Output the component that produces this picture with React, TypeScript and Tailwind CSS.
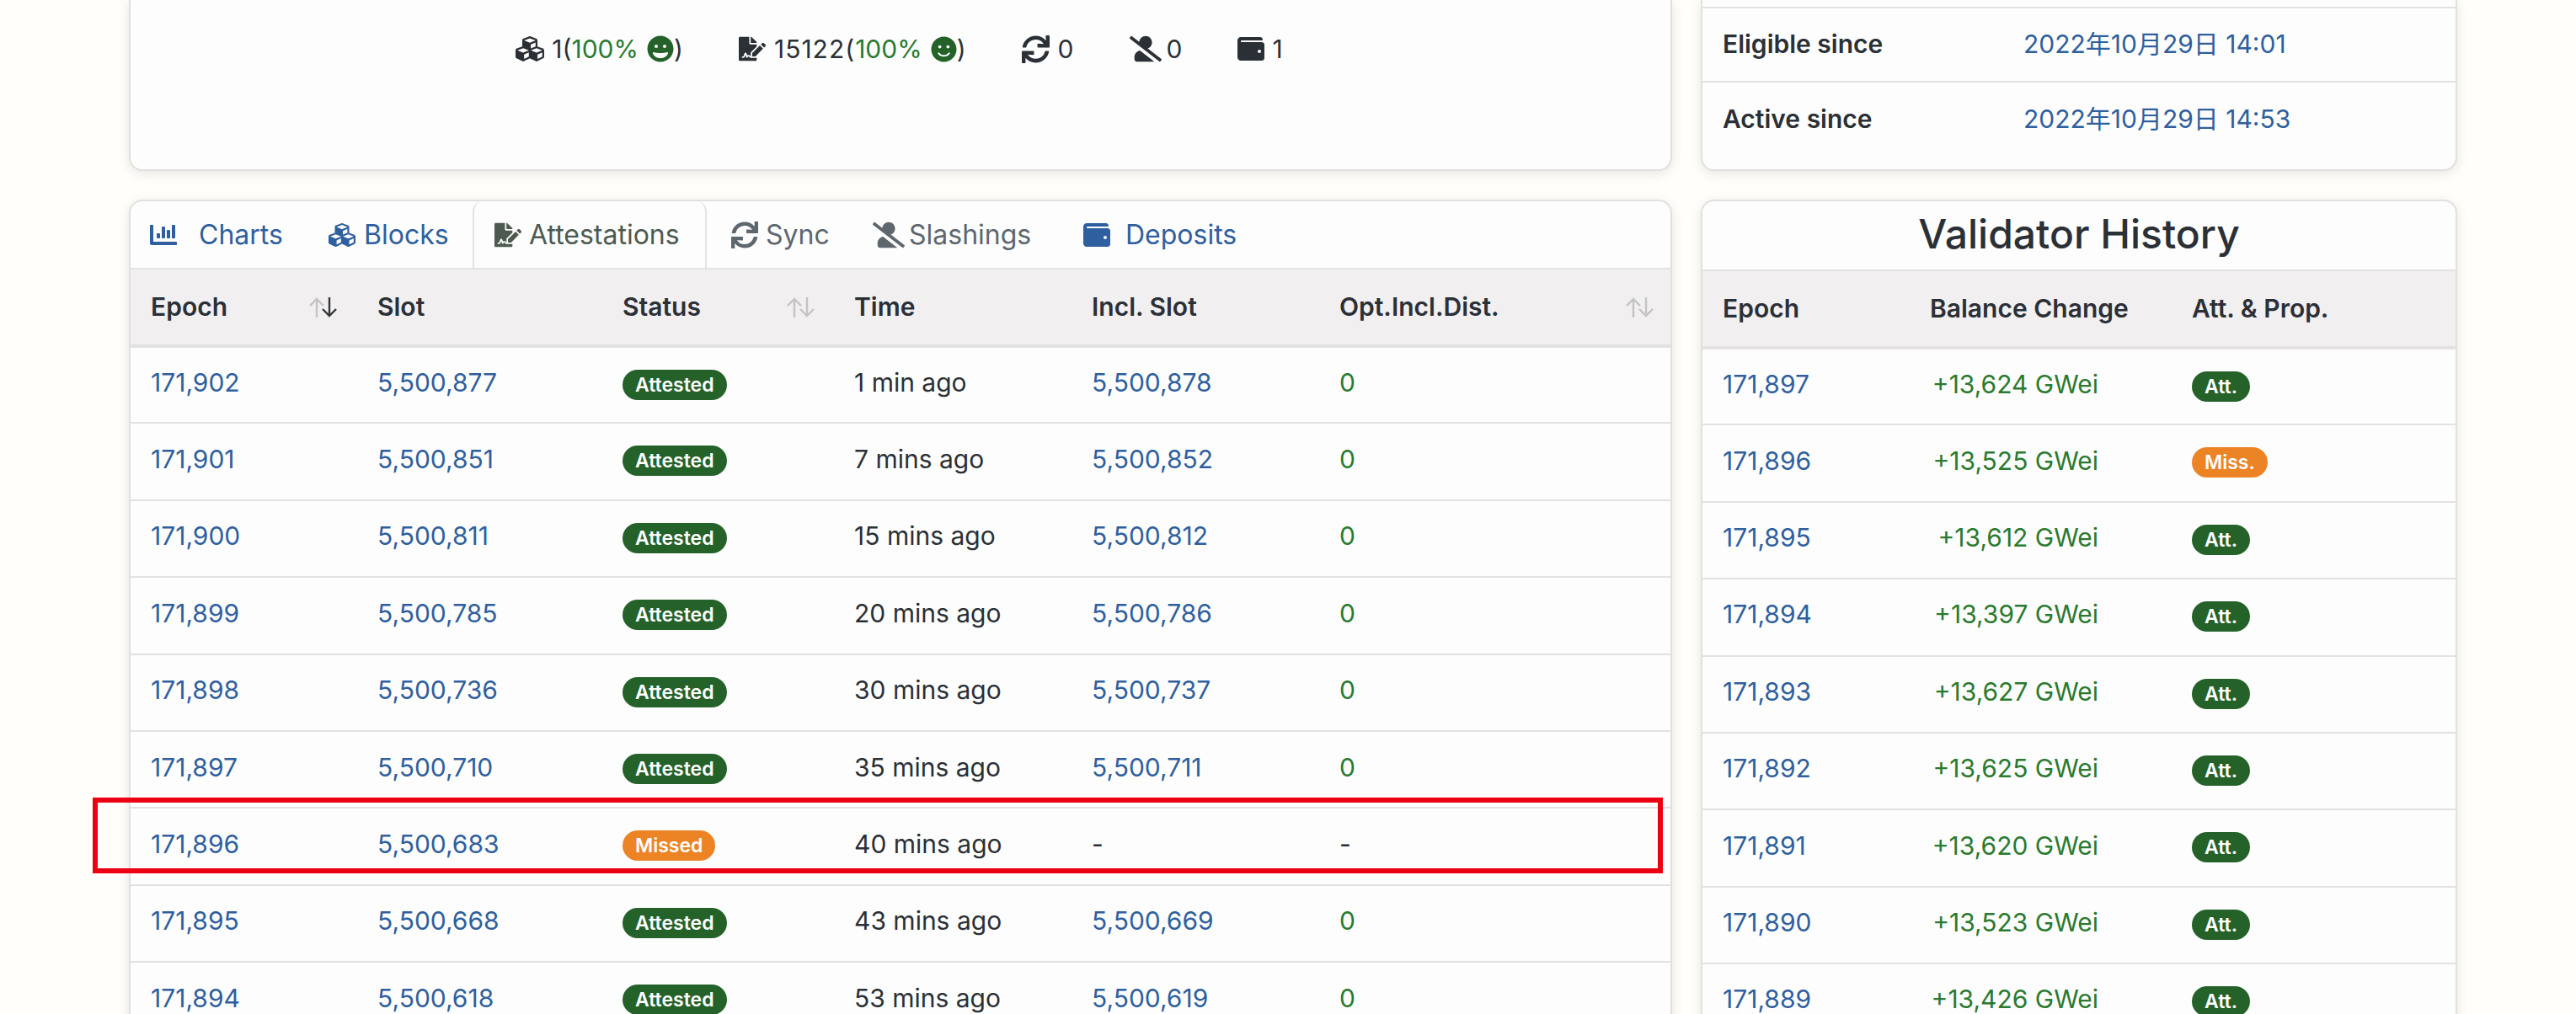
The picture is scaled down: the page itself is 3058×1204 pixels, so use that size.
import { FaChartBar, FaCubes, FaFileSignature, FaSync, FaUserSlash, FaWallet, FaGrin, FaSmile } from "react-icons/fa";
import type { ReactNode } from "react";

const font = { fontFamily: "Inter, 'Noto Sans CJK SC', sans-serif" };

const attestations = [
  ["171,902", "5,500,877", "Attested", "1 min ago", "5,500,878", "0"],
  ["171,901", "5,500,851", "Attested", "7 mins ago", "5,500,852", "0"],
  ["171,900", "5,500,811", "Attested", "15 mins ago", "5,500,812", "0"],
  ["171,899", "5,500,785", "Attested", "20 mins ago", "5,500,786", "0"],
  ["171,898", "5,500,736", "Attested", "30 mins ago", "5,500,737", "0"],
  ["171,897", "5,500,710", "Attested", "35 mins ago", "5,500,711", "0"],
  ["171,896", "5,500,683", "Missed", "40 mins ago", "-", "-"],
  ["171,895", "5,500,668", "Attested", "43 mins ago", "5,500,669", "0"],
  ["171,894", "5,500,618", "Attested", "53 mins ago", "5,500,619", "0"],
];

const history = [
  ["171,897", "+13,624 GWei", "Att."],
  ["171,896", "+13,525 GWei", "Miss."],
  ["171,895", "+13,612 GWei", "Att."],
  ["171,894", "+13,397 GWei", "Att."],
  ["171,893", "+13,627 GWei", "Att."],
  ["171,892", "+13,625 GWei", "Att."],
  ["171,891", "+13,620 GWei", "Att."],
  ["171,890", "+13,523 GWei", "Att."],
  ["171,889", "+13,426 GWei", "Att."],
];

function Badge({ label }: { label: string }) {
  const missed = label.startsWith("Miss");
  return (
    <span
      className={`inline-block rounded-full px-[15px] h-[36px] leading-[36px] text-[23px] font-semibold text-white align-middle ${
        missed ? "bg-[#ec8426]" : "bg-[#24622a]"
      }`}
    >
      {label}
    </span>
  );
}

function SortArrows({ active }: { active?: boolean }) {
  return (
    <svg width="36" height="26" viewBox="0 0 36 26" fill="none" strokeWidth="2.4" className="inline-block">
      <path d="M10 25V3M2 11l8-8 8 8" stroke="#c4c4c4" />
      <path d="M25 1v22M17 15l8 8 8-8" stroke={active ? "#33373c" : "#c4c4c4"} />
    </svg>
  );
}

function Tab({ icon, label, active, muted, width }: { icon: ReactNode; label: string; active?: boolean; muted?: boolean; width: string }) {
  return (
    <div
      className={`h-[79px] flex items-center ${width} ${
        active
          ? "text-[#4d5a50] border-x-2 border-[#e4e2e2] rounded-t-[12px]"
          : muted
            ? "text-[#5e666e]"
            : "text-[#2f5f9e]"
      }`}
    >
      {icon}
      <span>{label}</span>
    </div>
  );
}

export default function App() {
  return (
    <div className="h-[1204px] overflow-hidden bg-[#fffefb] text-[#2b3036] text-[30px]" style={font}>
      <div className="flex gap-[34px] pl-[153px] pr-[141px]">
        <div className="flex-1 flex flex-col gap-[34px]">
          <div className="h-[203px] bg-[#fdfdfd] rounded-b-[16px] border-x-2 border-b-2 border-[#e2e0df] shadow-[0_3px_14px_rgba(0,0,0,0.1)] flex justify-center gap-[66px] pt-[39px] pr-[3px] leading-[38px]">
            <div className="flex items-center h-[38px]">
              <FaCubes className="text-[34px] mr-[9px]" />1(<span className="text-[#2a7a2f]">100%</span>
              <FaGrin className="text-[#24622a] text-[32px] ml-[10px]" />)
            </div>
            <div className="flex items-center h-[38px]">
              <FaFileSignature className="text-[32px] mr-[10px]" />
              <span className="tracking-[1px]">15122(</span>
              <span className="text-[#2a7a2f]">100%</span>
              <FaSmile className="text-[#24622a] text-[31px] ml-[10px]" />)
            </div>
            <div className="flex items-center h-[38px]">
              <FaSync className="text-[33px] mr-[10px]" />0
            </div>
            <div className="flex items-center h-[38px]">
              <FaUserSlash className="text-[38px] mr-[6px]" />0
            </div>
            <div className="flex items-center h-[38px]">
              <FaWallet className="text-[32px] mr-[9px]" />1
            </div>
          </div>

          <div className="bg-[#fdfdfd] rounded-t-[16px] border-x-2 border-t-2 border-[#e2e0df] shadow-[0_3px_14px_rgba(0,0,0,0.1)]">
            <div className="flex h-[79px] text-[32px]">
              <Tab width="w-[211px] pl-[23px]" icon={<FaChartBar className="text-[32px] mr-[26px]" />} label="Charts" />
              <Tab width="w-[195px] pl-[24px]" icon={<FaCubes className="text-[32px] mr-[10px]" />} label="Blocks" />
              <Tab width="w-[278px] pl-[24px]" active icon={<FaFileSignature className="text-[32px] mr-[9px]" />} label="Attestations" />
              <Tab width="w-[175px] pl-[29px]" muted icon={<FaSync className="text-[32px] mr-[9px]" />} label="Sync" />
              <Tab width="w-[248px] pl-[22px]" muted icon={<FaUserSlash className="text-[38px] mr-[5px]" />} label="Slashings" />
              <Tab width="w-[230px] pl-[24px]" icon={<FaWallet className="text-[32px] mr-[18px]" />} label="Deposits" />
            </div>
            <table className="w-full table-fixed border-collapse">
              <colgroup>
                <col className="w-[269px]" />
                <col className="w-[291px]" />
                <col className="w-[275px]" />
                <col className="w-[282px]" />
                <col className="w-[294px]" />
                <col />
              </colgroup>
              <thead>
                <tr className="h-[92px] bg-[#f1eff0] border-t-2 border-b-4 border-[#e3e1e1] text-left">
                  <th className="pl-[24px] pr-[22px] font-semibold">
                    <div className="flex justify-between items-center">Epoch<SortArrows active /></div>
                  </th>
                  <th className="pl-[24px] font-semibold">Slot</th>
                  <th className="pl-[24px] pr-[21px] font-semibold">
                    <div className="flex justify-between items-center">Status<SortArrows /></div>
                  </th>
                  <th className="pl-[24px] font-semibold">Time</th>
                  <th className="pl-[24px] font-semibold">Incl. Slot</th>
                  <th className="pl-[24px] pr-[18px] font-semibold">
                    <div className="flex justify-between items-center">Opt.Incl.Dist.<SortArrows /></div>
                  </th>
                </tr>
              </thead>
              <tbody>
                {attestations.map((row) => (
                  <tr key={row[0]} className="h-[91.4px] border-b-2 border-[#e3e1e1]">
                    <td className="pl-[24px] pb-[5px] text-[#2f5f9e]">{row[0]}</td>
                    <td className="pl-[24px] pb-[5px] text-[#2f5f9e]">{row[1]}</td>
                    <td className="pl-[24px] pb-[6px]"><Badge label={row[2]} /></td>
                    <td className="pl-[24px] pb-[5px]">{row[3]}</td>
                    <td className={`pl-[24px] pb-[5px] ${row[4] === "-" ? "" : "text-[#2f5f9e]"}`}>{row[4]}</td>
                    <td className={`pl-[24px] pb-[5px] ${row[5] === "-" ? "" : "text-[#2a7a2f]"}`}>{row[5]}</td>
                  </tr>
                ))}
              </tbody>
            </table>
          </div>
        </div>

        <div className="w-[898px] flex flex-col gap-[34px]">
          <div className="h-[203px] bg-[#fdfdfd] rounded-b-[16px] border-x-2 border-b-2 border-[#e2e0df] shadow-[0_3px_14px_rgba(0,0,0,0.1)]">
            <div className="h-[10px] border-b-2 border-[#e3e1e1]" />
            <div className="h-[88px] pb-[2px] flex items-center border-b-2 border-[#e3e1e1] px-[24px]">
              <span className="w-[357px] font-semibold">Eligible since</span>
              <span className="text-[#2f5f9e]">2022年10月29日 14:01</span>
            </div>
            <div className="h-[88px] pb-[2px] flex items-center px-[24px]">
              <span className="w-[357px] font-semibold">Active since</span>
              <span className="text-[#2f5f9e]">2022年10月29日 14:53</span>
            </div>
          </div>

          <div className="bg-[#fdfdfd] rounded-t-[16px] border-x-2 border-t-2 border-[#e2e0df] shadow-[0_3px_14px_rgba(0,0,0,0.1)]">
            <div className="h-[81px] pb-[4px] flex items-center justify-center text-[48px] font-medium">Validator History</div>
            <table className="w-full table-fixed border-collapse">
              <colgroup>
                <col className="w-[246px]" />
                <col className="w-[311px]" />
                <col />
              </colgroup>
              <thead>
                <tr className="h-[92px] bg-[#f1eff0] border-t-2 border-b-4 border-[#e3e1e1] text-left">
                  <th className="pl-[24px] font-semibold">Epoch</th>
                  <th className="pl-[24px] font-semibold">Balance Change</th>
                  <th className="pl-[24px] font-semibold">Att. &amp; Prop.</th>
                </tr>
              </thead>
              <tbody>
                {history.map((row) => (
                  <tr key={row[0]} className="h-[91.4px] border-b-2 border-[#e3e1e1]">
                    <td className="pl-[24px] pb-[6px] text-[#2f5f9e]">{row[0]}</td>
                    <td className="pr-[87px] pb-[6px] text-right text-[#2a7a2f]">{row[1]}</td>
                    <td className="pl-[24px] pb-[6px]"><Badge label={row[2]} /></td>
                  </tr>
                ))}
              </tbody>
            </table>
          </div>
        </div>
      </div>

      {/* red annotation around the missed row */}
      <div className="absolute left-[110px] top-[947px] w-[1864px] h-[90px] border-[6px] border-[#ec0012]" />
    </div>
  );
}
